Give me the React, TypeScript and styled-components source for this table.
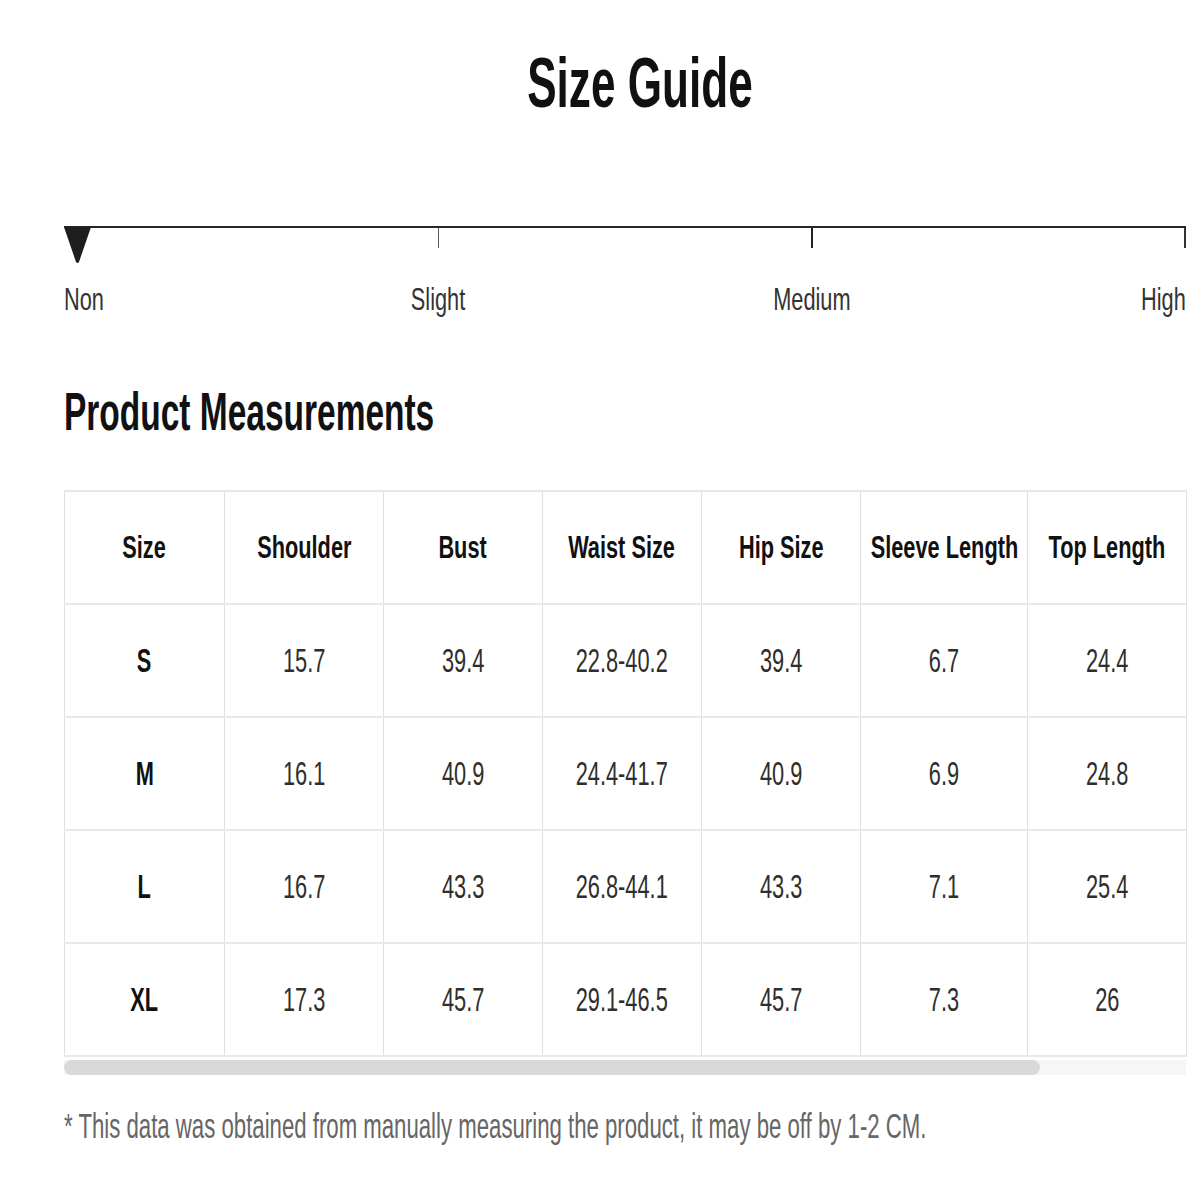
import React from "react";
import styled, { createGlobalStyle } from "styled-components";

const GlobalStyle = createGlobalStyle`
  html, body {
    margin: 0;
    padding: 0;
    background: #ffffff;
  }
  body {
    font-family: "Liberation Sans", Arial, sans-serif;
  }
`;

// page column: the scale, heading and table all span 64px -> 1186px
const Page = styled.div`
  width: 1122px;
  padding: 0 14px 40px 64px;
`;

// the screenshot's type is horizontally squeezed, so narrow the glyphs
const Squeeze = styled.span<{ $x?: number; $origin?: string }>`
  display: inline-block;
  flex: none;
  white-space: nowrap;
  transform: scaleX(${p => p.$x ?? 0.66});
  transform-origin: ${p => p.$origin ?? "center"};
`;

// long line: set small and stretched up, so its layout width stays the visible width
const Stretch = styled.span<{ $y: number }>`
  display: inline-block;
  white-space: nowrap;
  transform: scaleY(${p => p.$y});
  transform-origin: left center;
`;

const Title = styled.h1`
  margin: 43px 0 0;
  padding-left: 30px;
  font-size: 70px;
  line-height: 80px;
  font-weight: 700;
  color: #111;
  text-align: center;
`;

const Scale = styled.div`
  margin-top: 103px;
`;

const TickRow = styled.div`
  display: flex;
  justify-content: space-between;
  height: 36px;
  border-top: 2px solid #262626;
`;

const LabelRow = styled.div`
  display: flex;
  justify-content: space-between;
  margin-top: 19px;
  height: 32px;
`;

type Align = "start" | "center" | "end";

// zero-width stop so that each mark and label hangs on its point of the line
const Stop = styled.div<{ $align: Align }>`
  width: 0;
  display: flex;
  justify-content: ${p =>
    p.$align === "start" ? "flex-start" : p.$align === "end" ? "flex-end" : "center"};
`;

const Tick = styled.div<{ $w: number; $color: string }>`
  flex: none;
  width: ${p => p.$w}px;
  height: 20px;
  background: ${p => p.$color};
`;

const Marker = styled.svg`
  flex: none;
  display: block;
  margin-top: -1px;
`;

const Label = styled.div`
  flex: none;
  font-size: 32px;
  line-height: 32px;
  color: #333;
`;

const Heading = styled.h2`
  margin: 69px 0 0;
  font-size: 54px;
  line-height: 54px;
  font-weight: 700;
  color: #111;
`;

const Table = styled.table`
  margin-top: 52px;
  width: 1122px;
  table-layout: fixed;
  border-collapse: collapse;
`;

const Col = styled.col<{ $w: number }>`
  width: ${p => p.$w}px;
`;

const Row = styled.tr`
  height: 113px;
`;

const Cell = styled.td<{ $head?: boolean; $bold?: boolean }>`
  padding: 0;
  border-top: 2px solid #e8e8e8;
  border-bottom: 2px solid #e8e8e8;
  border-left: 1px solid #e0e0e0;
  border-right: 1px solid #e0e0e0;
  vertical-align: middle;
  font-size: ${p => (p.$head ? 32 : 33)}px;
  font-weight: ${p => (p.$head || p.$bold ? 700 : 400)};
  color: ${p => (p.$head || p.$bold ? "#111" : "#2e2e2e")};
`;

// keeps wide (unscaled) text centred on the column
const CellInner = styled.div`
  display: flex;
  justify-content: center;
`;

const ScrollTrack = styled.div`
  margin-top: 3px;
  height: 15px;
  background: #f6f6f6;
`;

const ScrollThumb = styled.div<{ $w: number }>`
  width: ${p => p.$w}px;
  height: 100%;
  background: #d9d9d9;
  border-radius: 8px;
`;

const Note = styled.p`
  margin: 34px 0 0;
  font-size: 22.2px;
  line-height: 35px;
  color: #666;
`;

const stops: { label: string; align: Align; tick: number; color: string }[] = [
  { label: "Non", align: "start", tick: 0, color: "#222" },
  { label: "Slight", align: "center", tick: 1, color: "#555" },
  { label: "Medium", align: "center", tick: 2, color: "#222" },
  { label: "High", align: "end", tick: 2, color: "#333" },
];

const originFor = (a: Align) => (a === "start" ? "left" : a === "end" ? "right" : "center");

const columns = [
  { name: "Size", w: 160 },
  { name: "Shoulder", w: 159 },
  { name: "Bust", w: 159 },
  { name: "Waist Size", w: 159 },
  { name: "Hip Size", w: 159 },
  { name: "Sleeve Length", w: 167 },
  { name: "Top Length", w: 159 },
];

const rows = [
  ["S", "15.7", "39.4", "22.8-40.2", "39.4", "6.7", "24.4"],
  ["M", "16.1", "40.9", "24.4-41.7", "40.9", "6.9", "24.8"],
  ["L", "16.7", "43.3", "26.8-44.1", "43.3", "7.1", "25.4"],
  ["XL", "17.3", "45.7", "29.1-46.5", "45.7", "7.3", "26"],
];

export default function App() {
  return (
    <>
      <GlobalStyle />
      <Page>
        <Title>
          <Squeeze $x={0.63}>Size Guide</Squeeze>
        </Title>

        <Scale>
          <TickRow>
            {stops.map(s => (
              <Stop key={s.label} $align={s.align}>
                {s.tick === 0 ? (
                  <Marker width="27" height="37" viewBox="0 0 27 37">
                    <path d="M0 0 L27 0 L15 35 Q13.5 37 12 35 Z" fill="#1e1e1e" />
                  </Marker>
                ) : (
                  <Tick $w={s.tick} $color={s.color} />
                )}
              </Stop>
            ))}
          </TickRow>
          <LabelRow>
            {stops.map(s => (
              <Stop key={s.label} $align={s.align}>
                <Label>
                  <Squeeze $x={0.68} $origin={originFor(s.align)}>
                    {s.label}
                  </Squeeze>
                </Label>
              </Stop>
            ))}
          </LabelRow>
        </Scale>

        <Heading>
          <Squeeze $x={0.62} $origin="left">
            Product Measurements
          </Squeeze>
        </Heading>

        <Table>
          <colgroup>
            {columns.map(c => (
              <Col key={c.name} $w={c.w} />
            ))}
          </colgroup>
          <thead>
            <Row>
              {columns.map(c => (
                <Cell as="th" key={c.name} $head>
                  <CellInner>
                    <Squeeze $x={0.68}>{c.name}</Squeeze>
                  </CellInner>
                </Cell>
              ))}
            </Row>
          </thead>
          <tbody>
            {rows.map(r => (
              <Row key={r[0]}>
                {r.map((v, i) => (
                  <Cell key={i} $bold={i === 0}>
                    <CellInner>
                      <Squeeze $x={0.66}>{v}</Squeeze>
                    </CellInner>
                  </Cell>
                ))}
              </Row>
            ))}
          </tbody>
        </Table>

        <ScrollTrack>
          <ScrollThumb $w={976} />
        </ScrollTrack>

        <Note>
          <Stretch $y={1.575}>
            * This data was obtained from manually measuring the product, it may be off by 1-2 CM.
          </Stretch>
        </Note>
      </Page>
    </>
  );
}
